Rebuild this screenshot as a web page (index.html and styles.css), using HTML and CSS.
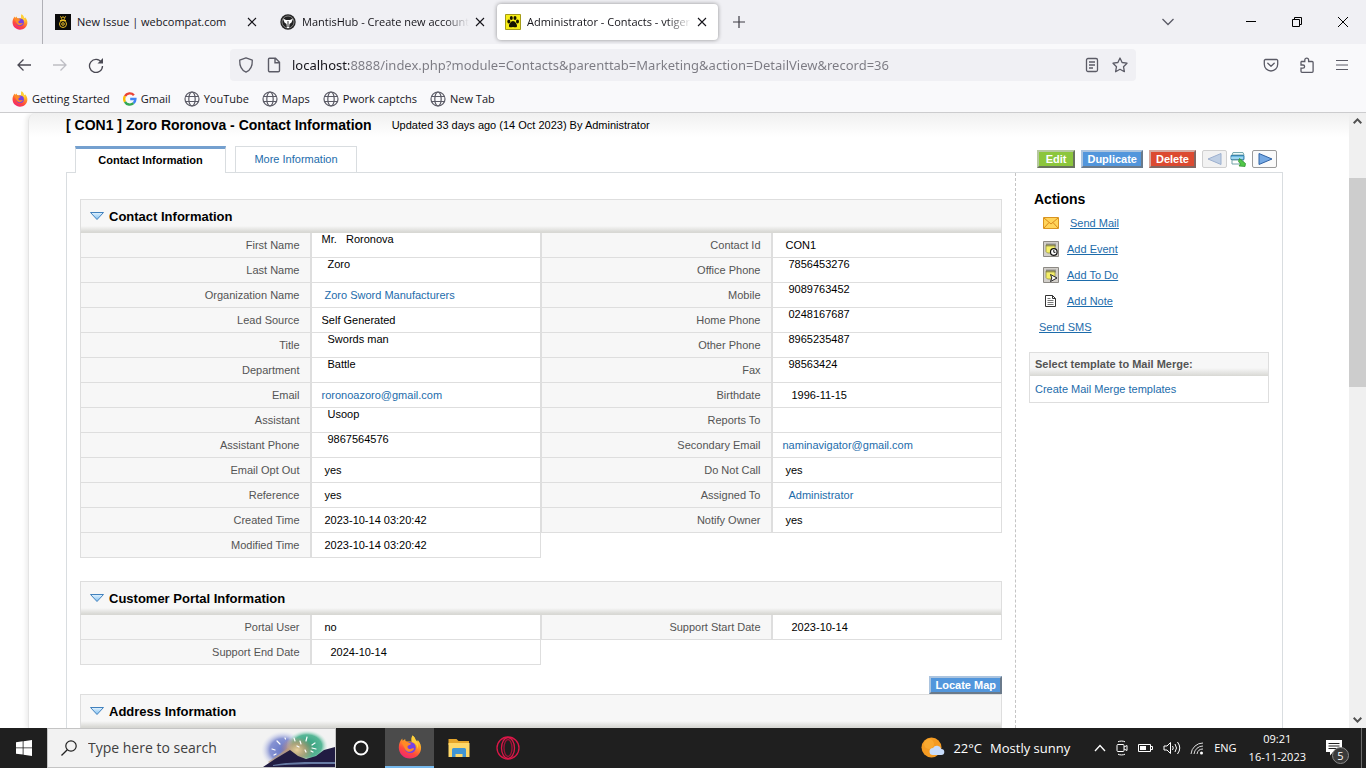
FILE: index.html
```html
<!DOCTYPE html>
<html lang="en">
<head>
<meta charset="utf-8">
<title>Administrator - Contacts - vtiger CRM</title>
<link rel="stylesheet" href="styles.css">
</head>
<body>
<svg class="defs" aria-hidden="true">
  <defs>
    <linearGradient id="flame" x1="0.8" y1="0" x2="0.3" y2="1">
      <stop offset="0" stop-color="#fff04a"/><stop offset="0.35" stop-color="#ffa524"/><stop offset="0.7" stop-color="#ff4a3c"/><stop offset="1" stop-color="#ef2574"/>
    </linearGradient>
    <linearGradient id="tri" x1="0" y1="0" x2="0" y2="1">
      <stop offset="0" stop-color="#e4f4ff"/><stop offset="1" stop-color="#7dbdf0"/>
    </linearGradient>
    <symbol id="firefox" viewBox="0 0 24 24">
      <path fill="url(#flame)" d="M14.5 0.500c1.800 1.300 2.600 2.700 3 4.200l1.700 1.800 0.600-1.500c2.500 3 3.700 6 3.200 9.300C22.200 19.800 17.600 23.500 12 23.500 5.600 23.500 0.800 18.700 0.800 12.500c0-3.500 1-6.200 3.400-8.900l0.500 2.200C5.700 4.900 6.600 4.200 7.300 3.900 7 5 7.500 6 8.400 6.500c2.200 0 3.500-0.300 5.400 0.200-0.600-2.300-0.200-4.500 0.700-6.200z"/>
      <circle cx="12.200" cy="12.500" r="5.600" fill="#7542e5"/>
      <path fill="#ff8a26" d="M3.500 8c2-2.200 5.300-2 7.200-0.300l2.300 0.700c-0.300 1.500-2 1.600-3 2.300-1 0.800-0.300 3.300 2.200 3.300 1.500 0 2.500-1 4-0.500-1 2.800-4.600 4-7.200 2.700C6.500 14.900 6.200 11 3.500 8z"/>
      <path fill="#ffcf3a" d="M14.500 0.500c1.800 1.300 2.600 2.700 3 4.200 2.500 2.600 3.200 6 1.900 9.300 0-4-1.600-6-5.600-7.300-0.600-2.300-0.200-4.500 0.700-6.200z"/>
    </symbol>
    <symbol id="globe" viewBox="0 0 16 16">
      <g fill="none" stroke="#5b5b66" stroke-width="1.200"><circle cx="8" cy="8" r="7"/><ellipse cx="8" cy="8" rx="3.200" ry="7"/><path d="M1.500 5.500h13M1.500 10.500h13"/></g>
    </symbol>
    <symbol id="close" viewBox="0 0 10 10"><path d="M1 1l8 8M9 1l-8 8" fill="none" stroke="#15141a" stroke-width="1.100"/></symbol>
    <symbol id="toggle" viewBox="0 0 14 8"><path d="M0.500 0.500h13L7 7.500z" fill="url(#tri)" stroke="#4181bd"/></symbol>
  </defs>
</svg>

<header class="browser">
  <div class="tabstrip">
    <div class="pinned"><svg width="16" height="16"><use href="#firefox"/></svg></div>
    <div class="tab">
      <svg width="16" height="16" viewBox="0 0 16 16"><path fill="#0b0b0b" d="M0 0h16v16H0z"/><g fill="none" stroke="#e9bd25"><circle cx="8" cy="4.500" r="1.600"/><circle cx="8" cy="10" r="3.500"/><circle cx="8" cy="10" r="1.300"/><path d="M5 6.500h6M5 2.500l1.500 1M11 2.500l-1.500 1"/></g></svg>
      <span class="tab-title">New Issue | webcompat.com</span>
      <button class="icon-btn" aria-label="Close tab"><svg width="10" height="10"><use href="#close"/></svg></button>
    </div>
    <div class="tab">
      <svg width="16" height="16" viewBox="0 0 16 16"><circle cx="8" cy="8" r="7.700" fill="#222"/><circle cx="8" cy="8" r="6" fill="none" stroke="#aaa" stroke-width="0.700"/><path fill="#fff" d="M3 4.500l3 1.500h4l3-1.500-1.500 4L9.500 10 9 14H7l-0.500-4-2-1.500z"/><path d="M8 7v6" stroke="#333"/></svg>
      <span class="tab-title fade">MantisHub - Create new account</span>
      <button class="icon-btn" aria-label="Close tab"><svg width="10" height="10"><use href="#close"/></svg></button>
    </div>
    <div class="tab active">
      <svg width="16" height="16" viewBox="0 0 16 16"><path fill="#f7ed17" stroke="#a49b18" d="M0.500 0.500h15v15h-15z"/><g fill="#161300"><ellipse cx="3.800" cy="7.500" rx="1.500" ry="2"/><ellipse cx="6.300" cy="4" rx="1.500" ry="2"/><ellipse cx="10" cy="4" rx="1.500" ry="2"/><ellipse cx="12.500" cy="7.500" rx="1.500" ry="2"/><path d="M8 7c2 0 4.500 3.500 4 5.500-1 1.500-2.500 0.500-4 0.500s-3 1-4-0.500C3.500 10.500 6 7 8 7z"/></g></svg>
      <span class="tab-title fade">Administrator - Contacts - vtiger</span>
      <button class="icon-btn" aria-label="Close tab"><svg width="10" height="10"><use href="#close"/></svg></button>
    </div>
    <button class="icon-btn new-tab" aria-label="New tab"><svg width="12" height="12" viewBox="0 0 12 12"><path d="M6 0v12M0 6h12" stroke="#3c3b43" stroke-width="1.200"/></svg></button>
    <div class="window-controls">
      <button class="icon-btn list-tabs" aria-label="List all tabs"><svg width="12" height="8" viewBox="0 0 12 8"><path d="M0.500 1L6 6.500 11.500 1" fill="none" stroke="#5b5b66" stroke-width="1.300"/></svg></button>
      <button class="icon-btn win" aria-label="Minimize"><svg width="10" height="10" viewBox="0 0 10 10"><path d="M0 4.500h10" stroke="#000"/></svg></button>
      <button class="icon-btn win" aria-label="Restore"><svg width="10" height="10" viewBox="0 0 10 10"><path d="M0.500 2.500h7v7h-7zM2.500 2.500v-2h7v7h-2" fill="none" stroke="#000"/></svg></button>
      <button class="icon-btn win" aria-label="Close window"><svg width="10" height="10" viewBox="0 0 10 10"><path d="M0 0l10 10M10 0L0 10" stroke="#000"/></svg></button>
    </div>
  </div>
  <div class="navbar">
    <div class="nav-buttons">
      <button class="icon-btn" aria-label="Back"><svg width="16" height="16" viewBox="0 0 16 16"><path d="M15 8H2M7.500 2.500L2 8l5.500 5.500" fill="none" stroke="#4b4a54" stroke-width="1.300"/></svg></button>
      <button class="icon-btn" aria-label="Forward" disabled><svg width="16" height="16" viewBox="0 0 16 16"><path d="M1 8h13M8.500 2.500L14 8l-5.500 5.500" fill="none" stroke="#bebec4" stroke-width="1.300"/></svg></button>
      <button class="icon-btn" aria-label="Reload"><svg width="16" height="16" viewBox="0 0 16 16"><path d="M13.500 5.500A6.500 6.500 0 1 0 14.500 9" fill="none" stroke="#4b4a54" stroke-width="1.300"/><path d="M15 1v5.500H9.500z" fill="#4b4a54"/></svg></button>
    </div>
    <div class="urlbar">
      <svg width="16" height="16" viewBox="0 0 16 16"><path d="M8 0.800l6.300 2.400c0.200 5.500-1.500 9.800-6.300 12C3.200 13 1.500 8.700 1.700 3.200z" fill="none" stroke="#5b5b66" stroke-width="1.300" stroke-linejoin="round"/></svg>
      <svg width="16" height="16" viewBox="0 0 16 16"><path d="M3.500 1.200h6l4 4v8.300a1.300 1.300 0 0 1-1.300 1.300H3.800a1.300 1.300 0 0 1-1.300-1.300V2.200a1 1 0 0 1 1-1zM9 1.500v4.200h4.300" fill="none" stroke="#5b5b66" stroke-width="1.400"/></svg>
      <input class="url" type="text" aria-label="Address" value="localhost:8888/index.php?module=Contacts&amp;parenttab=Marketing&amp;action=DetailView&amp;record=36">
      <button class="icon-btn" aria-label="Reader view"><svg width="16" height="16" viewBox="0 0 16 16"><g fill="none" stroke="#5b5b66" stroke-width="1.300"><rect x="2.500" y="1.500" width="11" height="13" rx="1.500"/><path d="M5 5h6M5 8h6M5 11h4"/></g></svg></button>
      <button class="icon-btn" aria-label="Bookmark this page"><svg width="16" height="16" viewBox="0 0 16 16"><path d="M8 1l2.100 4.500 4.900 0.700-3.500 3.500 0.900 5L8 12.300l-4.400 2.400 0.900-5L1 6.200l4.900-0.700z" fill="none" stroke="#5b5b66" stroke-width="1.300" stroke-linejoin="round"/></svg></button>
    </div>
    <div class="nav-tools">
      <button class="icon-btn" aria-label="Save to Pocket"><svg width="16" height="16" viewBox="0 0 16 16"><g fill="none" stroke="#5b5b66" stroke-width="1.300" stroke-linecap="round" stroke-linejoin="round"><path d="M2.500 2.500h11a1.200 1.200 0 0 1 1.200 1.200V7.300a6.700 6.700 0 0 1-13.400 0V3.700a1.200 1.200 0 0 1 1.200-1.200z"/><path d="M4.800 6.300L8 9.300l3.200-3"/></g></svg></button>
      <button class="icon-btn" aria-label="Extensions"><svg width="16" height="16" viewBox="0 0 16 16"><path d="M2.500 4.500h3.300V3a1.900 1.900 0 0 1 3.800 0v1.500h3.500a1 1 0 0 1 1 1v8.800a1 1 0 0 1-1 1H3a1 1 0 0 1-1-1v-3.100h2a1.500 1.500 0 0 0 0-3.200H2V5z" fill="none" stroke="#5b5b66" stroke-width="1.300"/></svg></button>
      <button class="icon-btn" aria-label="Menu"><svg width="14" height="12" viewBox="0 0 14 12"><path d="M1 1.500h12M1 6h12M1 10.500h12" stroke="#5b5b66" stroke-width="1.200"/></svg></button>
    </div>
  </div>
  <nav class="bookmarks" aria-label="Bookmarks">
    <a href="#"><svg width="16" height="16"><use href="#firefox"/></svg>Getting Started</a>
    <a href="#"><svg width="14" height="14" viewBox="0 0 14 14"><g fill="none" stroke-width="2.400"><path stroke="#ea4335" d="M2 4.200A5.500 5.500 0 0 1 10.900 3.200"/><path stroke="#fbbc05" d="M2 4.200a5.500 5.500 0 0 0 0 5.600"/><path stroke="#34a853" d="M2 9.800a5.500 5.500 0 0 0 8.500 1.400"/><path stroke="#4285f4" d="M10.500 11.200A5.500 5.500 0 0 0 12.400 7H7.200"/></g></svg>Gmail</a>
    <a href="#"><svg width="16" height="16"><use href="#globe"/></svg>YouTube</a>
    <a href="#"><svg width="16" height="16"><use href="#globe"/></svg>Maps</a>
    <a href="#"><svg width="16" height="16"><use href="#globe"/></svg>Pwork captchs</a>
    <a href="#"><svg width="16" height="16"><use href="#globe"/></svg>New Tab</a>
  </nav>
</header>

<div class="viewport">
  <main class="page">
    <div class="sheet">
      <div class="page-head">
        <h1>[ CON1 ] Zoro Roronova - Contact Information</h1>
        <span>Updated 33 days ago (14 Oct 2023) By Administrator</span>
      </div>
      <div class="toolbar">
        <nav class="view-tabs">
          <a class="current" href="#">Contact Information</a>
          <a href="#">More Information</a>
        </nav>
        <div class="record-actions">
          <button class="crm-btn green">Edit</button>
          <button class="crm-btn blue">Duplicate</button>
          <button class="crm-btn red">Delete</button>
          <button class="pager off" aria-label="Previous record"><svg width="16" height="12" viewBox="0 0 16 12"><path d="M14 0.500v11L1 6z" fill="#bfcfe4" stroke="#9cb0cf"/></svg></button>
          <button class="icon-btn jump" aria-label="Jump to record"><svg width="16" height="16" viewBox="0 0 16 16"><path d="M3 1.500h10l1 2.500H2z" fill="#eefafa" stroke="#77a9ae"/><path d="M1 4.500h13v4H1z" fill="#69bbe3" stroke="#3d84ad"/><path d="M2 9h11v4H2z" fill="#fff" stroke="#74a3a8"/><path d="M1 7h12" stroke="#d4f2ff"/><path d="M9.500 7.500l6 5-0.500 3-6-0.500 1.500-2-2-2.500z" fill="#51c748" stroke="#248b28" stroke-width="0.700"/></svg></button>
          <button class="pager" aria-label="Next record"><svg width="16" height="12" viewBox="0 0 16 12"><path d="M2 0.500v11L15 6z" fill="#76a9e3" stroke="#2f62a4"/></svg></button>
        </div>
      </div>
      <div class="panel">
        <div class="details">
          <section>
            <h2><svg width="14" height="8"><use href="#toggle"/></svg>Contact Information</h2>
            <table>
              <tr><th scope="row">First Name</th><td class="top">Mr.&nbsp;&nbsp; Roronova</td><th scope="row">Contact Id</th><td class="in1">CON1</td></tr>
              <tr><th scope="row">Last Name</th><td class="top in2">Zoro</td><th scope="row">Office Phone</th><td class="top in2">7856453276</td></tr>
              <tr><th scope="row">Organization Name</th><td class="in1"><a href="#">Zoro Sword Manufacturers</a></td><th scope="row">Mobile</th><td class="top in2">9089763452</td></tr>
              <tr><th scope="row">Lead Source</th><td>Self Generated</td><th scope="row">Home Phone</th><td class="top in2">0248167687</td></tr>
              <tr><th scope="row">Title</th><td class="top in2">Swords man</td><th scope="row">Other Phone</th><td class="top in2">8965235487</td></tr>
              <tr><th scope="row">Department</th><td class="top in2">Battle</td><th scope="row">Fax</th><td class="top in2">98563424</td></tr>
              <tr><th scope="row">Email</th><td><a href="#">roronoazoro@gmail.com</a></td><th scope="row">Birthdate</th><td class="in3">1996-11-15</td></tr>
              <tr><th scope="row">Assistant</th><td class="top in2">Usoop</td><th scope="row">Reports To</th><td></td></tr>
              <tr><th scope="row">Assistant Phone</th><td class="top in2">9867564576</td><th scope="row">Secondary Email</th><td><a href="#">naminavigator@gmail.com</a></td></tr>
              <tr><th scope="row">Email Opt Out</th><td class="in1">yes</td><th scope="row">Do Not Call</th><td class="in1">yes</td></tr>
              <tr><th scope="row">Reference</th><td class="in1">yes</td><th scope="row">Assigned To</th><td class="in2"><a href="#">Administrator</a></td></tr>
              <tr><th scope="row">Created Time</th><td class="in1">2023-10-14 03:20:42</td><th scope="row">Notify Owner</th><td class="in1">yes</td></tr>
              <tr><th scope="row">Modified Time</th><td class="in1">2023-10-14 03:20:42</td></tr>
            </table>
          </section>
          <section>
            <h2><svg width="14" height="8"><use href="#toggle"/></svg>Customer Portal Information</h2>
            <table>
              <tr><th scope="row">Portal User</th><td class="in1">no</td><th scope="row">Support Start Date</th><td class="in3">2023-10-14</td></tr>
              <tr><th scope="row">Support End Date</th><td class="in3">2024-10-14</td></tr>
            </table>
          </section>
          <section class="address">
            <button class="crm-btn blue">Locate Map</button>
            <h2><svg width="14" height="8"><use href="#toggle"/></svg>Address Information</h2>
          </section>
        </div>
        <aside class="side">
          <h3>Actions</h3>
          <ul>
            <li><svg width="16" height="12" viewBox="0 0 16 12"><path d="M0.500 0.500h15v11h-15z" fill="#ffd45a" stroke="#d99420"/><path d="M1 1l7 6 7-6M1 11l5-5.500M15 11l-5-5.500" fill="none" stroke="#d98a1c"/></svg><a class="wide" href="#">Send Mail</a></li>
            <li><svg width="16" height="16" viewBox="0 0 16 16"><path fill="#d2cfca" stroke="#8c8984" d="M0.500 0.500h15v15h-15z"/><path d="M3 4h9v8H4.500L3 10.500z" fill="#f5ef69" stroke="#8d8936" stroke-width="0.700"/><path d="M4 2.500v3M6 2.500v3M8 2.500v3M10 2.500v3M12 2.500v3" stroke="#444" stroke-width="0.800"/><circle cx="10.800" cy="11" r="3.300" fill="#fff" stroke="#111" stroke-width="1.200"/><path d="M10.800 9v2.300h1.700" fill="none" stroke="#111"/></svg><a href="#">Add Event</a></li>
            <li><svg width="16" height="16" viewBox="0 0 16 16"><path fill="#d2cfca" stroke="#8c8984" d="M0.500 0.500h15v15h-15z"/><path d="M3 4h9v8H4.500L3 10.500z" fill="#f5ef69" stroke="#8d8936" stroke-width="0.700"/><path d="M4 2.500v3M6 2.500v3M8 2.500v3M10 2.500v3M12 2.500v3" stroke="#444" stroke-width="0.800"/><path d="M7.500 7.500l6.500 3.500-6.500 3.500 1.300-3.500z" fill="#fff" stroke="#222"/></svg><a href="#">Add To Do</a></li>
            <li><svg width="16" height="14" viewBox="0 0 16 14"><path d="M2.500 1.500h7l3 3v8h-10zM9.500 1.500v3h3" fill="#fff" stroke="#333"/><path d="M4.500 4.500h3M4.500 6.500h6M4.500 8.500h6M4.500 10.500h6" stroke="#777"/></svg><a href="#">Add Note</a></li>
            <li><a class="sms" href="#">Send SMS</a></li>
          </ul>
          <div class="merge">
            <h4>Select template to Mail Merge:</h4>
            <a href="#">Create Mail Merge templates</a>
          </div>
        </aside>
      </div>
    </div>
  </main>
  <div class="scrollbar" aria-hidden="true">
    <svg width="9" height="6" viewBox="0 0 9 6"><path d="M0.700 5.200L4.500 1.400l3.800 3.800" fill="none" stroke="#505050" stroke-width="2"/></svg>
    <div class="track"><div class="thumb"></div></div>
    <svg width="9" height="6" viewBox="0 0 9 6"><path d="M0.700 0.800L4.500 4.600 8.300 0.800" fill="none" stroke="#505050" stroke-width="2"/></svg>
  </div>
</div>

<footer class="taskbar">
  <button class="task start" aria-label="Start"><svg width="16" height="16" viewBox="0 0 16 16"><path fill="#fff" d="M0 2.200l6.700-0.900v6.200H0zM7.500 1.200L16 0v7.500H7.500zM0 8.300h6.700v6.300L0 13.700zM7.500 8.300H16V16l-8.500-1.200z"/></svg></button>
  <div class="search">
    <svg width="16" height="16" viewBox="0 0 16 16"><circle cx="10" cy="6" r="5.200" fill="none" stroke="#222" stroke-width="1.200"/><path d="M6.300 9.700L0.500 15.500" stroke="#222" stroke-width="1.300"/></svg>
    <input type="text" aria-label="Search" placeholder="Type here to search">
    <svg width="74" height="38" viewBox="0 0 74 38">
      <defs>
        <radialGradient id="fwb"><stop offset="0" stop-color="#6577c6"/><stop offset="0.600" stop-color="#8793d2"/><stop offset="1" stop-color="#dcdff2" stop-opacity="0"/></radialGradient>
        <radialGradient id="fwg"><stop offset="0" stop-color="#2a9b79"/><stop offset="0.700" stop-color="#58b797"/><stop offset="1" stop-color="#d4eee5" stop-opacity="0"/></radialGradient>
        <radialGradient id="fwo"><stop offset="0" stop-color="#e8cf9a"/><stop offset="0.500" stop-color="#cf9d72" stop-opacity="0.700"/><stop offset="1" stop-color="#dc8a60" stop-opacity="0"/></radialGradient>
      </defs>
      <ellipse cx="22" cy="21" rx="22" ry="19" fill="url(#fwb)"/><ellipse cx="46" cy="17" rx="21" ry="16" fill="url(#fwg)"/><ellipse cx="36" cy="21" rx="17" ry="13" fill="url(#fwo)"/>
      <path d="M7 33l20-14 4 3-20 14z" fill="#b99b78" opacity="0.700"/>
      <path d="M2 38L14 30l15-9 8 6 8 3 10-3 8-6 11-3v20z" fill="#211c42"/>
      <path d="M12 36c20-4 40-3 62-3v2c-22 0-40 0-62 2z" fill="#687ba4"/>
      <path d="M11 20l3 1M16 12l3 3M24 9l0.500 1M13 26l2-1M46 8l-1 4M54 14l-3 2M55 20l-4-1M39 12l1 3M33 9l1 3M36 17l2 1M44 21l1 2M50 22l2 1" stroke="#fff" stroke-width="1.200" stroke-linecap="round"/>
    </svg>
  </div>
  <button class="task" aria-label="Cortana"><svg width="16" height="16" viewBox="0 0 16 16"><circle cx="8" cy="8" r="6.500" fill="none" stroke="#fff" stroke-width="2"/></svg></button>
  <button class="task running" aria-label="Firefox"><svg width="24" height="24"><use href="#firefox"/></svg></button>
  <button class="task" aria-label="File Explorer"><svg width="22" height="20" viewBox="0 0 22 20"><path d="M0.500 1h8l2 2H21v4H0.500z" fill="#e5a52b"/><path d="M0.500 5h21v14h-21z" fill="#ffd869"/><path d="M4 19v-7.500a1.500 1.500 0 0 1 1.500-1.500h11a1.500 1.500 0 0 1 1.500 1.500V19h-3.500v-3h-7v3z" fill="#4195d3"/></svg></button>
  <button class="task" aria-label="Opera GX"><svg width="24" height="24" viewBox="0 0 24 24"><g fill="none" stroke="#db1748" stroke-width="1.300"><circle cx="12" cy="12" r="11"/><ellipse cx="12" cy="12" rx="6.500" ry="10.500"/><ellipse cx="12" cy="12" rx="4" ry="8.500" stroke="#a01238"/></g></svg></button>
  <div class="tray">
    <div class="weather">
      <svg width="24" height="22" viewBox="0 0 24 22"><circle cx="10.500" cy="10.500" r="10" fill="#f59b22"/><circle cx="8" cy="7" r="5" fill="#ffb83d" opacity="0.500"/><path d="M12 18a3.500 3.500 0 0 1 0-7 4.500 4.500 0 0 1 8.300 1 3 3 0 0 1 0 6z" fill="#c8dcfa"/></svg>
      <span>22°C</span><span>Mostly sunny</span>
    </div>
    <div class="tray-icons">
      <svg width="12" height="16" viewBox="0 0 12 16"><path d="M1 11l5-5.500L11 11" fill="none" stroke="#fff" stroke-width="1.300"/></svg>
      <svg width="14" height="16" viewBox="0 0 14 16"><g fill="none" stroke="#fff"><rect x="2" y="4.500" width="7" height="7" rx="1"/><path d="M9 7l3-1.500v5L9 9M3 1.800c2-1 5-1 7 0M3 14.200c2 1 5 1 7 0"/></g></svg>
      <svg width="16" height="16" viewBox="0 0 16 16"><path d="M0.500 4.500h12v7h-12zM13 6.500h1.500v3H13" fill="none" stroke="#fff"/><path d="M2 6h6v4H2z" fill="#fff"/></svg>
      <svg width="18" height="16" viewBox="0 0 18 16"><path d="M1 6h3l3.500-3.500v11L4 10H1zM9.500 6q1.500 2 0 4M12 4q3 4 0 8M14.500 2q4.500 6 0 12" fill="none" stroke="#fff"/></svg>
      <svg width="14" height="16" viewBox="0 0 14 16"><g fill="none" stroke="#ddd"><path d="M1 14A12 12 0 0 1 13 3"/><path d="M4 14a9 9 0 0 1 9-8"/><path d="M7 14a6 6 0 0 1 6-5"/></g><circle cx="11.500" cy="13" r="1.500" fill="#fff"/></svg>
    </div>
    <span class="lang">ENG</span>
    <time class="clock"><span>09:21</span><span>16-11-2023</span></time>
    <button class="icon-btn notify" aria-label="5 new notifications"><svg width="16" height="16" viewBox="0 0 16 16"><path d="M0 0h16v12H7l-3 3.500V12H0z" fill="#fff"/><path d="M2.500 3.500h11M2.500 6h11M2.500 8.500h8" stroke="#222"/></svg><span class="badge">5</span></button>
  </div>
</footer>
</body>
</html>
```

FILE: styles.css
```css
* { box-sizing: border-box; }

body {
  margin: 0;
  height: 100vh;
  display: flex;
  flex-direction: column;
  overflow: hidden;
  background: #fff;
  font: 11px/13px "Liberation Sans", Arial, sans-serif;
  color: #000;
}

svg { display: block; flex: none; }
.defs { position: absolute; width: 0; height: 0; }
h1, h2, h3, h4, ul { margin: 0; padding: 0; }
a { color: #1d6cab; text-decoration: none; }
button { font: inherit; }

.icon-btn {
  display: flex;
  align-items: center;
  justify-content: center;
  padding: 0;
  border: 0;
  background: none;
}

/* Browser chrome */
.browser {
  flex: none;
  background: #f9f9fb;
  border-bottom: 1px solid #ccccce;
  font: 11px/16px "Open Sans", sans-serif;
  color: #15141a;
}

.tabstrip {
  display: flex;
  align-items: center;
  height: 44px;
  background: #f0f0f4;
}

.pinned {
  display: flex;
  align-items: center;
  align-self: stretch;
  width: 43px;
  padding-left: 12px;
  border-right: 1px solid #b0b0b6;
}

.tab {
  display: flex;
  align-items: center;
  gap: 6px;
  width: 225px;
  height: 36px;
  padding: 0 11px 0 12px;
}

.tab.active {
  width: 221px;
  padding: 0 11px 0 8px;
  margin-left: 4px;
  background: #fff;
  border-radius: 4px;
  box-shadow: 0 0 4px rgba(0, 0, 0, 0.4);
}

.tab-title { flex: 1; white-space: nowrap; }
.tab-title.fade { mask-image: linear-gradient(to left, transparent, #000 24px); }
.new-tab { width: 42px; height: 36px; }
.window-controls { display: flex; margin-left: auto; }
.list-tabs { width: 40px; height: 44px; margin-right: 40px; }
.win { width: 46px; height: 44px; }

.navbar {
  display: flex;
  align-items: center;
  height: 41px;
  padding: 0 17px 0 16px;
}

.nav-buttons { display: flex; gap: 20px; width: 214px; }

.urlbar {
  display: flex;
  flex: 1;
  align-items: center;
  gap: 12px;
  height: 32px;
  max-width: 906px;
  padding: 0 8px;
  border-radius: 4px;
  background: #f0f0f4;
}

.url {
  flex: 1;
  min-width: 0;
  padding: 0;
  margin-left: -2px;
  border: 0;
  outline: 0;
  font: 13px/20px "Noto Sans", sans-serif;
  color: transparent;
  background: linear-gradient(90deg, #15141a 57px, #7b7a82 57px);
  background-clip: text;
  -webkit-background-clip: text;
}

.nav-tools { display: flex; gap: 20px; margin-left: auto; }

.bookmarks {
  display: flex;
  align-items: center;
  gap: 13px;
  height: 27px;
  padding-left: 12px;
}

.bookmarks a { display: flex; align-items: center; gap: 4px; color: #15141a; }

/* Record page */
.viewport { display: flex; flex: 1; min-height: 0; }

.page {
  flex: 1;
  min-width: 0;
  overflow: hidden;
  padding-left: 28px;
}

.sheet {
  min-height: 100%;
  padding: 0 66px 0 37px;
  border-left: 1px solid #e4e4e4;
  border-top-left-radius: 8px;
  background: linear-gradient(#f0f0f0, #fff 24px);
  box-shadow: -2px 0 4px #ececec;
}

.page-head { display: flex; align-items: center; gap: 20px; height: 33px; padding-bottom: 9px; }
.page-head h1 { font-size: 14px; line-height: 16px; }

.toolbar { display: flex; align-items: center; justify-content: space-between; }

.view-tabs { display: flex; gap: 9px; height: 27px; padding-left: 9px; margin-bottom: -1px; }

.view-tabs a {
  z-index: 1;
  min-width: 122px;
  padding: 6px 0 0;
  border: 1px solid #d9dde0;
  border-bottom: 0;
  background: #fff;
  text-align: center;
}

.view-tabs a:not(.current) { height: 26px; }

.view-tabs .current {
  min-width: 151px;
  padding-top: 5px;
  border-top: 3px solid #74a0cf;
  color: #000;
  font-weight: bold;
}

.record-actions { display: flex; align-items: center; gap: 6px; padding-right: 6px; }

.crm-btn {
  height: 18px;
  padding: 0 4px;
  border: 2px outset #b9c4cf;
  color: #fff;
  font-weight: bold;
  line-height: 13px;
}

.green { padding: 0 7px; background: #8cc63c; border-color: #b6c8a0; }
.blue { background: #5296dc; border-color: #abc4df; }
.red { padding: 0 5px; background: #dc4a31; border-color: #d6a9a0; }

.pager {
  display: flex;
  align-items: center;
  justify-content: center;
  width: 25px;
  height: 18px;
  padding: 0;
  border: 1px solid #9a9a9a;
  border-radius: 2px;
  background: #fafafa;
}

.pager.off { border-color: #d0d0d0; background: #f2f2f2; }
.jump { margin-left: -3px; }

.panel { display: flex; border: 1px solid #d9dde0; border-bottom: 0; background: #fff; }

.details {
  flex: 1;
  display: flex;
  flex-direction: column;
  gap: 23px;
  padding: 26px 13px 0;
}

h2 {
  display: flex;
  align-items: center;
  gap: 5px;
  height: 34px;
  padding-left: 9px;
  border: 1px solid #dedede;
  border-bottom: 1px solid #d8d8d4;
  background: linear-gradient(#f7f7f7 26px, #d8d8d4);
  font-size: 13px;
  font-weight: bold;
}

table { width: 100%; table-layout: fixed; border-spacing: 0; }

th, td {
  height: 25px;
  padding: 0 10px;
  border: solid #dedede;
  border-width: 0 1px 1px;
}

th { width: 25%; background: #f7f7f7; color: #545454; font-weight: normal; text-align: right; }
td { width: 25%; text-align: left; }
td.top { vertical-align: top; }
td.in1 { padding-left: 13px; }
td.in2 { padding-left: 16px; }
td.in3 { padding-left: 19px; }

.address { display: flex; flex-direction: column; margin-top: -12px; }
.address .crm-btn { align-self: flex-end; }

.side { width: 267px; padding: 18px 13px 0; border-left: 1px dashed #c4c4c4; }
.side h3 { padding-left: 5px; font-size: 14px; line-height: 16px; }

.side ul { padding: 3px 0 0 14px; list-style: none; }
.side li { display: flex; align-items: center; gap: 8px; height: 26px; }
.side li a { text-decoration: underline; }
.side .wide { padding-left: 3px; }
.side .sms { margin-left: -4px; }

.merge { margin-top: 12px; border: 1px solid #dedede; }

.merge h4 {
  padding: 5px;
  height: 23px;
  background: linear-gradient(#f7f7f7 15px, #d8d8d4);
  color: #545454;
  font-size: 11px;
}

.merge a { display: block; padding: 7px 5px 6px; }

.scrollbar {
  display: flex;
  flex-direction: column;
  align-items: center;
  gap: 6px;
  width: 17px;
  padding: 5px 0;
  background: #f0f0f0;
}

.track { flex: 1; align-self: stretch; }
.thumb { height: 36%; margin-top: 48px; background: #cdcdcd; }

/* Taskbar */
.taskbar {
  display: flex;
  flex: none;
  height: 40px;
  background: #1f1f1f;
  color: #fff;
  font: 11px/18px "Open Sans", sans-serif;
}

.task {
  display: flex;
  align-items: center;
  justify-content: center;
  width: 49px;
  padding: 0;
  border: 0;
  background: none;
}

.start { width: 47px; }
.running { background: #4b4b4b; border-bottom: 2px solid #76b9ed; }

.search {
  display: flex;
  align-items: center;
  gap: 11px;
  width: 289px;
  padding-left: 13px;
  border: 1px solid #c4c4c4;
  background: #f2f2f2;
}

.search input {
  flex: 1;
  min-width: 0;
  padding: 0;
  border: 0;
  outline: 0;
  background: none;
  font: 14px/20px "Open Sans", sans-serif;
}

.search input::placeholder { color: #404040; opacity: 1; }

.tray { display: flex; align-items: center; margin-left: auto; padding-right: 4px; }
.weather { display: flex; align-items: center; gap: 8px; margin-right: 24px; font-size: 13px; }
.tray-icons { display: flex; gap: 9px; }
.lang { margin: 0 12px 0 10px; }
.clock { display: flex; flex-direction: column; align-items: center; }
.notify { position: relative; width: 56px; height: 40px; border-right: 1px solid #6b6b6b; }

.badge {
  position: absolute;
  right: 12px;
  bottom: 4px;
  width: 17px;
  height: 17px;
  border: 1px solid #8b8b8b;
  border-radius: 50%;
  background: #3a3a3a;
  color: #fff;
  font-size: 11px;
  line-height: 15px;
  text-align: center;
}
```
